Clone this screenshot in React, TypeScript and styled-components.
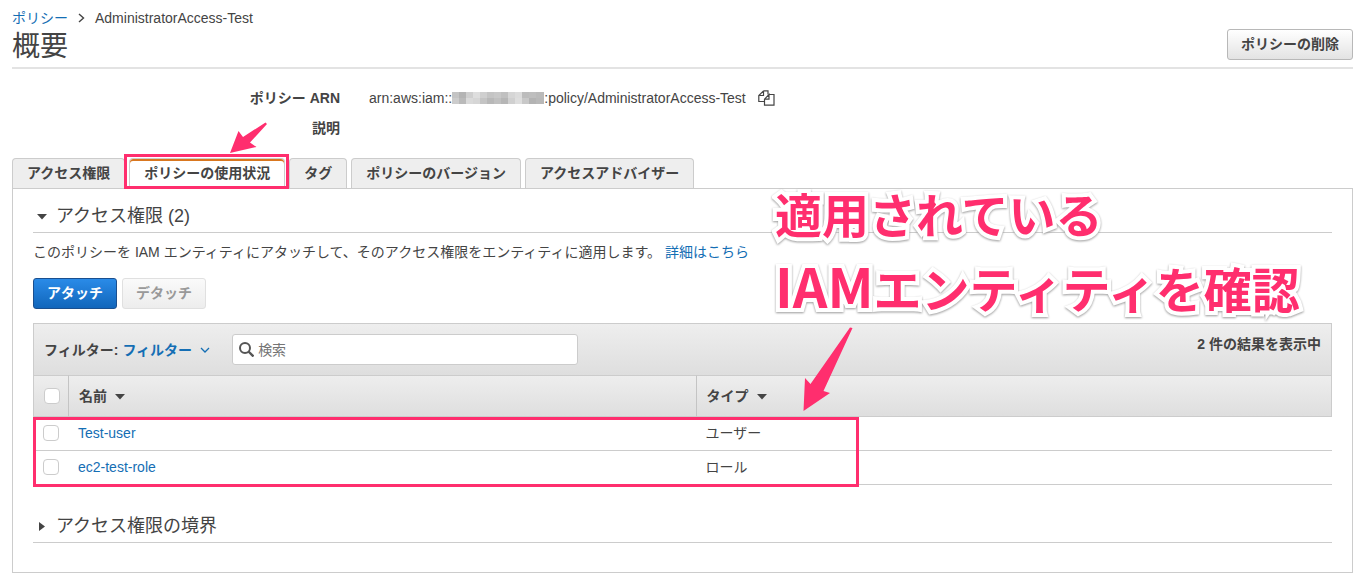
import React from "react";
import styled, { createGlobalStyle } from "styled-components";

const PINK = "#ff2e6e";
const LINK = "#146eb4";

const GlobalStyle = createGlobalStyle`
  * { box-sizing: border-box; }
  body {
    margin: 0;
    background: #fff;
    color: #444;
    font: 14px/20px "Liberation Sans", "Noto Sans CJK JP", sans-serif;
  }
  button, input { font: inherit; color: inherit; }
`;

const Page = styled.main`
  padding: 8px 2px 6px 12px;
`;

const TopBar = styled.header`
  display: flex;
  justify-content: space-between;
  align-items: flex-start;
  padding-bottom: 4px;
  border-bottom: 2px solid #e3e3e3;
`;

const TopActions = styled.div`
  padding-top: 21px;
`;

const Breadcrumb = styled.nav`
  display: flex;
  align-items: center;
  gap: 10px;
`;

const Link = styled.a`
  color: ${LINK};
  text-decoration: none;
`;

const Title = styled.h1`
  margin: 0;
  padding-top: 3px;
  font-size: 28px;
  line-height: 32px;
  font-weight: 400;
`;

const Button = styled.button<{ $primary?: boolean }>`
  height: 31px;
  padding: 0 13px 2px;
  font-weight: 700;
  line-height: 20px;
  white-space: nowrap;
  border-radius: 3px;
  border: 1px solid ${(p) => (p.$primary ? "#1a4f8f" : "#b8b8b8")};
  color: ${(p) => (p.$primary ? "#fff" : "#444")};
  background: ${(p) =>
    p.$primary
      ? "linear-gradient(#2a8be8, #1166bb)"
      : "linear-gradient(#fff, #e3e3e3)"};
  &:disabled {
    color: #999;
    border-color: #e0e0e0;
    background: linear-gradient(#fafafa, #ededed);
  }
`;

const Details = styled.dl`
  display: grid;
  grid-template-columns: 328px 1fr;
  column-gap: 29px;
  row-gap: 10px;
  margin: 19px 0 20px;
`;

const Term = styled.dt`
  font-weight: 700;
  text-align: right;
`;

const Value = styled.dd`
  display: flex;
  align-items: center;
  margin: 0;
`;

const CopyButton = styled.button`
  display: flex;
  margin-left: 12px;
  padding: 0;
  border: 0;
  background: none;
`;

const Tabs = styled.div`
  display: flex;
  gap: 4px;
`;

const Tab = styled.button<{ $active?: boolean }>`
  position: relative;
  height: 30px;
  padding: 0 14px 2px;
  font-weight: 700;
  white-space: nowrap;
  border: 1px solid #ccc;
  border-bottom: 0;
  border-radius: 4px 4px 0 0;
  background: ${(p) => (p.$active ? "#fff" : "#eee")};
  box-shadow: ${(p) => (p.$active ? "inset 0 2px #d9771f" : "none")};
`;

const TabMark = styled.span`
  position: absolute;
  inset: -5px -5px -1px -6px;
  z-index: 1;
  border: 3px solid ${PINK};
`;

const TabArrow = styled.svg`
  position: absolute;
  left: 98px;
  bottom: 34px;
  z-index: 2;
`;

const Panel = styled.section`
  position: relative;
  padding: 16px 20px 29px;
  border: 1px solid #ccc;
`;

const SectionTitle = styled.h2`
  display: flex;
  align-items: center;
  gap: 9px;
  margin: 0;
  padding: 0 4px 5px;
  font-size: 18px;
  line-height: 22px;
  font-weight: 400;
  border-bottom: 1px solid #ccc;
`;

const Description = styled.p`
  margin: 9px 0 16px;
`;

const Actions = styled.div`
  display: flex;
  gap: 5px;
  margin-bottom: 14px;
`;

const TableArea = styled.div`
  position: relative;
  margin-bottom: 30px;
`;

const FilterBar = styled.div`
  display: flex;
  align-items: center;
  height: 52px;
  padding: 0 10px;
  border: 1px solid #ccc;
  border-bottom: 0;
  background: linear-gradient(#eee, #dedede);
`;

const FilterLabel = styled.span`
  font-weight: 700;
`;

const FilterMenu = styled.button`
  display: flex;
  align-items: center;
  gap: 8px;
  padding: 0 0 0 4px;
  border: 0;
  background: none;
  color: ${LINK};
  font-weight: 700;
`;

const SearchBox = styled.label`
  display: flex;
  align-items: center;
  gap: 4px;
  width: 346px;
  height: 31px;
  margin-left: 22px;
  padding: 0 6px;
  border: 1px solid #ccc;
  border-radius: 3px;
  background: #fff;
`;

const SearchInput = styled.input`
  flex: 1;
  min-width: 0;
  padding: 0;
  border: 0;
  outline: 0;
  background: none;
  &::placeholder { color: #757575; }
`;

const ResultCount = styled.span`
  align-self: flex-start;
  margin: 10px 0 0 auto;
  font-weight: 700;
`;

const Table = styled.table`
  width: 100%;
  table-layout: fixed;
  border-collapse: separate;
  border-spacing: 0;
  thead tr { background: linear-gradient(#eee, #dedede); }
`;

const HeadCell = styled.th<{ $width?: string }>`
  width: ${(p) => p.$width ?? "auto"};
  height: 42px;
  padding: 0 10px;
  text-align: left;
  border: 1px solid #ccc;
  border-right-width: 0;
  & + & { border-left-color: #c4c4c4; }
  &:last-child { border-right-width: 1px; }
`;

const Sortable = styled.span`
  display: flex;
  align-items: center;
  gap: 8px;
`;

const Cell = styled.td`
  height: 34px;
  padding: 0 10px 2px;
  border-bottom: 1px solid #ccc;
`;

const Checkbox = styled.input`
  display: block;
  appearance: none;
  width: 16px;
  height: 16px;
  margin: 0;
  border: 1px solid #ccc;
  border-radius: 4px;
  background: #fff;
`;

const RowsMark = styled.span`
  position: absolute;
  left: 0;
  bottom: -2px;
  width: 826px;
  height: 70px;
  border: 3px solid ${PINK};
  pointer-events: none;
`;

const Note = styled.div`
  position: absolute;
  top: -13px;
  left: 762px;
  font: 700 47px/74px "Noto Sans CJK JP", sans-serif;
  white-space: nowrap;
  color: ${PINK};
  -webkit-text-stroke: 8px #fff;
  paint-order: stroke fill;
  filter: drop-shadow(0 1px 1px #999);
  pointer-events: none;
`;

const NoteLine = styled.div<{ $size: number }>`
  height: 74px;
  font-size: ${(p) => p.$size}px;
`;

const NoteLatin = styled.span`
  font-size: 54px;
  line-height: 1;
`;

const NoteArrow = styled.svg`
  position: absolute;
  left: 790px;
  top: 138px;
`;

const Caret = ({ right }: { right?: boolean }) => (
  <svg width="10" height="10" viewBox="0 0 10 10" fill="#444" aria-hidden="true">
    <path d={right ? "M2 1v9l6-4.500z" : "M0 3h10L5 8.500z"} />
  </svg>
);

const maskedTones = [
  ["#c4c4c4", "#b4b4b4", "#cfcfcf", "#dedede", "#cfcfcf", "#c4c4c4", "#c8c8c8", "#c0c0c0", "#d6d6d6", "#dcdcdc", "#bcbcbc", "#bebebe", "#bababa"],
  ["#cccccc", "#bababa", "#dadada", "#d6d6d6", "#c4c4c4", "#b8b8b8", "#c0c0c0", "#b6b6b6", "#d0d0d0", "#dedede", "#c8c8c8", "#b3b3b3", "#b8b8b8"],
];

const MaskedId = () => (
  <svg width="92" height="14" viewBox="0 0 92 14" role="img" aria-label="masked">
    {maskedTones.map((row, y) =>
      row.map((tone, x) => (
        <rect key={`${x}-${y}`} x={x * 7} y={y * 6 + 1} width="8" height="6" fill={tone} />
      ))
    )}
  </svg>
);

const entities = [
  { name: "Test-user", type: "ユーザー" },
  { name: "ec2-test-role", type: "ロール" },
];

export default function App() {
  return (
    <>
      <GlobalStyle />
      <Page>
        <TopBar>
          <div>
            <Breadcrumb>
              <Link href="#policies">ポリシー</Link>
              <svg width="7" height="10" viewBox="0 0 7 10" fill="none" stroke="#444" strokeWidth="1.400" aria-hidden="true">
                <path d="M1 1l4.500 4L1 9" />
              </svg>
              <span>AdministratorAccess-Test</span>
            </Breadcrumb>
            <Title>概要</Title>
          </div>
          <TopActions>
            <Button type="button">ポリシーの削除</Button>
          </TopActions>
        </TopBar>

        <Details>
          <Term>ポリシー ARN</Term>
          <Value>
            <span>arn:aws:iam::</span>
            <MaskedId />
            <span>:policy/AdministratorAccess-Test</span>
            <CopyButton type="button" aria-label="コピー">
              <svg width="17" height="16" viewBox="0 0 17 16" fill="none" stroke="#444" strokeWidth="1.200">
                <path d="M5.500 0.800H10V4.500M5.500 0.800L0.800 5.500V11.500H6.200M5.500 0.800V5.500H0.800" />
                <path d="M11 4.500H16V15.200H6.500V9.200L11 4.500V9.200H6.500" />
              </svg>
            </CopyButton>
          </Value>
          <Term>説明</Term>
          <Value />
        </Details>

        <Tabs role="tablist">
          <Tab type="button" role="tab">アクセス権限</Tab>
          <Tab type="button" role="tab" aria-selected="true" $active>
            ポリシーの使用状況
            <TabMark />
            <TabArrow width="40" height="34" viewBox="0 0 40 34" fill={PINK} aria-hidden="true">
              <path d="M37.500 2.500L39 4L22 22.500L28.500 27L2 33L10.500 11L15 17Z" />
            </TabArrow>
          </Tab>
          <Tab type="button" role="tab">タグ</Tab>
          <Tab type="button" role="tab">ポリシーのバージョン</Tab>
          <Tab type="button" role="tab">アクセスアドバイザー</Tab>
        </Tabs>

        <Panel>
          <SectionTitle>
            <Caret />
            アクセス権限 (2)
          </SectionTitle>
          <Description>
            このポリシーを IAM エンティティにアタッチして、そのアクセス権限をエンティティに適用します。{" "}
            <Link href="#details">詳細はこちら</Link>
          </Description>
          <Actions>
            <Button type="button" $primary>アタッチ</Button>
            <Button type="button" disabled>デタッチ</Button>
          </Actions>

          <TableArea>
            <FilterBar>
              <FilterLabel>フィルター:</FilterLabel>
              <FilterMenu type="button">
                フィルター
                <svg width="10" height="6" viewBox="0 0 10 6" fill="none" stroke={LINK} strokeWidth="1.300" aria-hidden="true">
                  <path d="M1 1l4 4 4-4" />
                </svg>
              </FilterMenu>
              <SearchBox>
                <svg width="15" height="15" viewBox="0 0 15 15" fill="none" stroke="#555" strokeWidth="2" aria-hidden="true">
                  <circle cx="6" cy="6" r="5" />
                  <path d="M9.500 9.500l5 5" strokeWidth="2.400" />
                </svg>
                <SearchInput type="text" placeholder="検索" aria-label="検索" />
              </SearchBox>
              <ResultCount>2 件の結果を表示中</ResultCount>
            </FilterBar>
            <Table>
              <thead>
                <tr>
                  <HeadCell $width="35px">
                    <Checkbox type="checkbox" aria-label="すべて選択" />
                  </HeadCell>
                  <HeadCell>
                    <Sortable>名前 <Caret /></Sortable>
                  </HeadCell>
                  <HeadCell $width="49%">
                    <Sortable>タイプ <Caret /></Sortable>
                  </HeadCell>
                </tr>
              </thead>
              <tbody>
                {entities.map((e) => (
                  <tr key={e.name}>
                    <Cell><Checkbox type="checkbox" aria-label={e.name} /></Cell>
                    <Cell><Link href={`#${e.name}`}>{e.name}</Link></Cell>
                    <Cell>{e.type}</Cell>
                  </tr>
                ))}
              </tbody>
            </Table>
            <RowsMark />
          </TableArea>

          <SectionTitle>
            <Caret right />
            アクセス権限の境界
          </SectionTitle>

          <Note>
            <NoteLine $size={47}>適用されている</NoteLine>
            <NoteLine $size={48}>
              <NoteLatin>IAM</NoteLatin>エンティティを確認
            </NoteLine>
          </Note>
          <NoteArrow width="52" height="86" viewBox="0 0 52 86" fill={PINK} aria-hidden="true">
            <path d="M47 0.500L49.500 1L20.500 64L27 66L0.500 84L2 51L7.500 57Z" />
          </NoteArrow>
        </Panel>
      </Page>
    </>
  );
}
